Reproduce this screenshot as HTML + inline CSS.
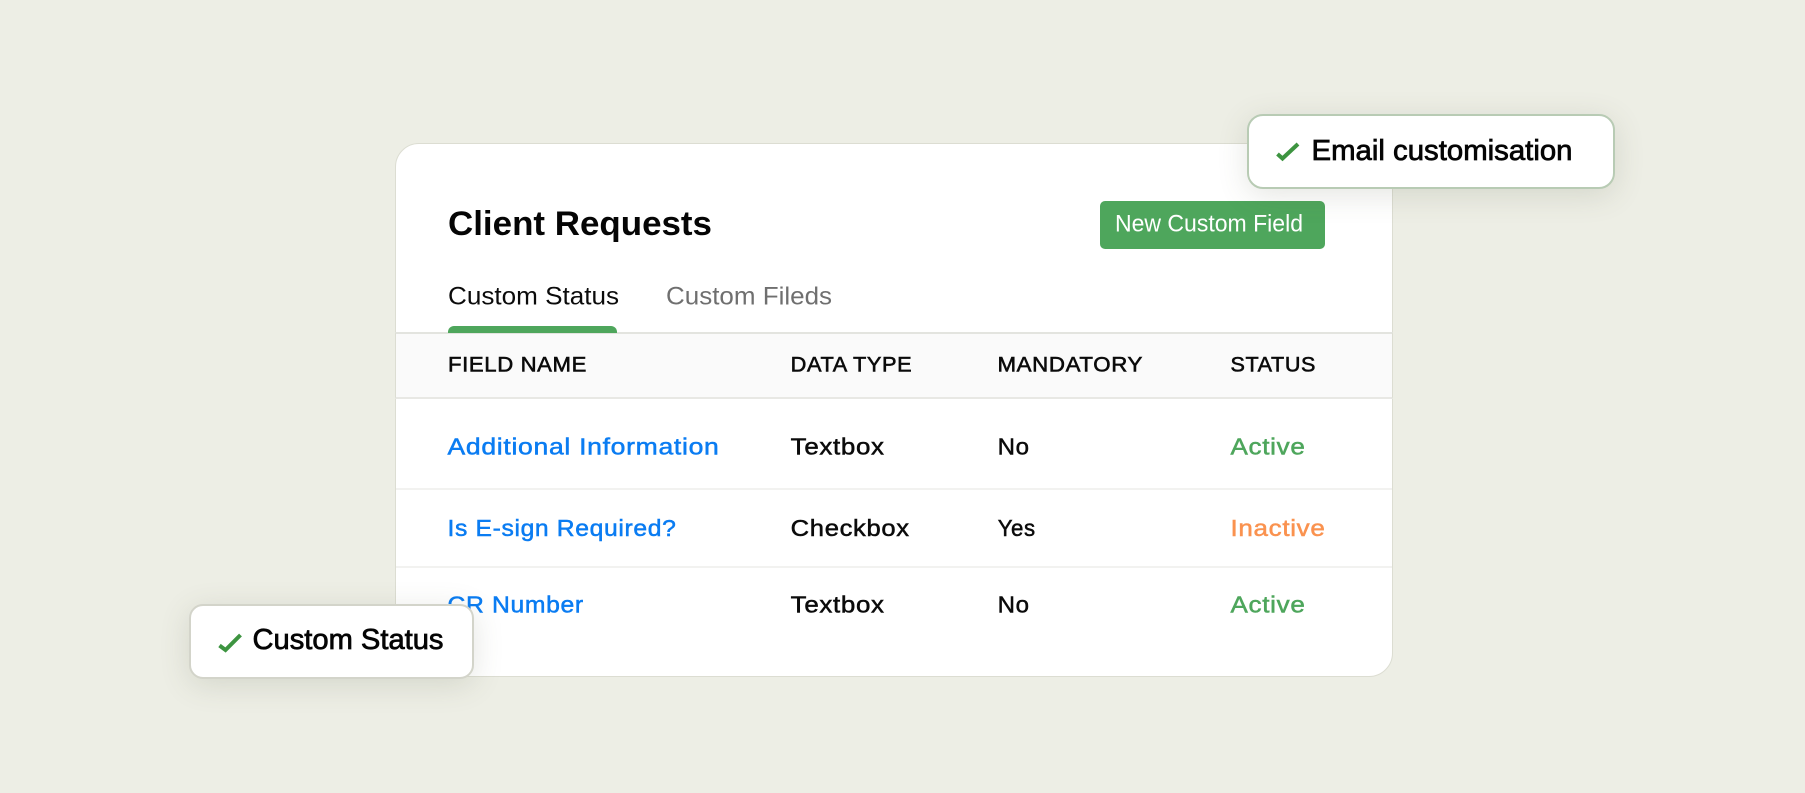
<!DOCTYPE html>
<html>
<head>
<meta charset="utf-8">
<style>
html,body{margin:0;padding:0;background:#edeee5;}
body{width:1805px;height:793px;position:relative;overflow:hidden;font-family:"Liberation Sans",sans-serif;}
.card{position:absolute;left:395px;top:143px;width:998px;height:534px;background:#fff;border:1.5px solid #dcddd2;border-radius:24px;box-sizing:border-box;overflow:hidden;}
.thead{position:absolute;left:395px;top:332px;width:998px;height:67px;background:#fafafa;border-top:2px solid #e3e4df;border-bottom:2px solid #e8e8e4;border-left:1.5px solid #dcddd2;border-right:1.5px solid #dcddd2;box-sizing:border-box;}
.line{position:absolute;left:396px;width:996px;height:1.5px;background:#f2f2f0;}
.tabbar{position:absolute;left:448px;top:326px;width:169px;height:7px;background:#4ea65c;border-radius:6px 6px 0 0;}
.btn{position:absolute;left:1100px;top:201px;width:225px;height:48px;background:#4ea65c;border-radius:5px;}
.pill{position:absolute;background:#fff;box-sizing:border-box;box-shadow:0 6px 30px rgba(90,95,70,.16);}
.p1{left:1247px;top:114px;width:368px;height:75px;border:2px solid #b8cbb4;border-radius:16px;}
.p2{left:189px;top:604px;width:285px;height:75px;border:2px solid #d3d4ca;border-radius:14px;}
svg{position:absolute;left:0;top:0;}
text{font-family:"Liberation Sans",sans-serif;}
.h{font-size:21.500px;fill:#0b0b0b;stroke:#0b0b0b;stroke-width:.6px;letter-spacing:.6px;}
.r{font-size:23px;stroke-width:.5px;letter-spacing:.6px;}
.blue{fill:#0a7cf2;stroke:#0a7cf2;}
.blk{fill:#0b0b0b;stroke:#0b0b0b;}
.grn{fill:#4ea65c;stroke:#4ea65c;}
.org{fill:#fa924f;stroke:#fa924f;}
.pt{font-size:29px;fill:#050505;stroke:#050505;stroke-width:.75px;}
</style>
</head>
<body>
<div class="card"></div>
<div class="thead"></div>
<div class="line" style="top:488.300px"></div>
<div class="line" style="top:566px"></div>
<div class="tabbar"></div>
<div class="btn"></div>
<svg width="1805" height="793" viewBox="0 0 1805 793">
<text x="448" y="235" font-size="34" font-weight="700" fill="#050505" textLength="264" lengthAdjust="spacingAndGlyphs">Client Requests</text>
<text x="448" y="304.500" font-size="25" fill="#0b0b0b" textLength="171" lengthAdjust="spacingAndGlyphs">Custom Status</text>
<text x="666" y="304.500" font-size="25" fill="#6f6f6f" textLength="166" lengthAdjust="spacingAndGlyphs">Custom Fileds</text>
<text x="1115" y="231.500" font-size="24" fill="#fff" textLength="188" lengthAdjust="spacingAndGlyphs">New Custom Field</text>

<text class="h" x="448" y="371.500" textLength="139" lengthAdjust="spacingAndGlyphs">FIELD NAME</text>
<text class="h" x="790.700" y="371.500" textLength="121.500" lengthAdjust="spacingAndGlyphs">DATA TYPE</text>
<text class="h" x="997.500" y="371.500" textLength="145.500" lengthAdjust="spacingAndGlyphs">MANDATORY</text>
<text class="h" x="1230.500" y="371.500" textLength="85.500" lengthAdjust="spacingAndGlyphs">STATUS</text>

<text class="r blue" x="447.500" y="454.500" textLength="272" lengthAdjust="spacingAndGlyphs">Additional Information</text>
<text class="r blk" x="790.700" y="454.500" textLength="94" lengthAdjust="spacingAndGlyphs">Textbox</text>
<text class="r blk" x="997.700" y="454.500" textLength="32" lengthAdjust="spacingAndGlyphs">No</text>
<text class="r grn" x="1230.500" y="454.500" textLength="75" lengthAdjust="spacingAndGlyphs">Active</text>

<text class="r blue" x="447.500" y="536" textLength="229" lengthAdjust="spacingAndGlyphs">Is E-sign Required?</text>
<text class="r blk" x="790.700" y="536" textLength="119" lengthAdjust="spacingAndGlyphs">Checkbox</text>
<text class="r blk" x="997.700" y="536" textLength="38" lengthAdjust="spacingAndGlyphs">Yes</text>
<text class="r org" x="1230.500" y="536" textLength="95" lengthAdjust="spacingAndGlyphs">Inactive</text>

<text class="r blue" x="447.500" y="612.500" textLength="136.300" lengthAdjust="spacingAndGlyphs">CR Number</text>
<text class="r blk" x="790.700" y="612.500" textLength="94" lengthAdjust="spacingAndGlyphs">Textbox</text>
<text class="r blk" x="997.700" y="612.500" textLength="32" lengthAdjust="spacingAndGlyphs">No</text>
<text class="r grn" x="1230.500" y="612.500" textLength="75" lengthAdjust="spacingAndGlyphs">Active</text>
</svg>
<div class="pill p1"></div>
<div class="pill p2"></div>
<svg width="1805" height="793" viewBox="0 0 1805 793">
<path d="M1277.500 154L1282.500 158.500L1298 144" fill="none" stroke="#3d9440" stroke-width="4"/>
<text class="pt" x="1311.500" y="160" textLength="261" lengthAdjust="spacingAndGlyphs">Email customisation</text>
<path d="M219.500 645.500L225.500 650L240.500 635" fill="none" stroke="#3d9440" stroke-width="4"/>
<text class="pt" x="252.500" y="649" textLength="191" lengthAdjust="spacingAndGlyphs">Custom Status</text>
</svg>
</body>
</html>
